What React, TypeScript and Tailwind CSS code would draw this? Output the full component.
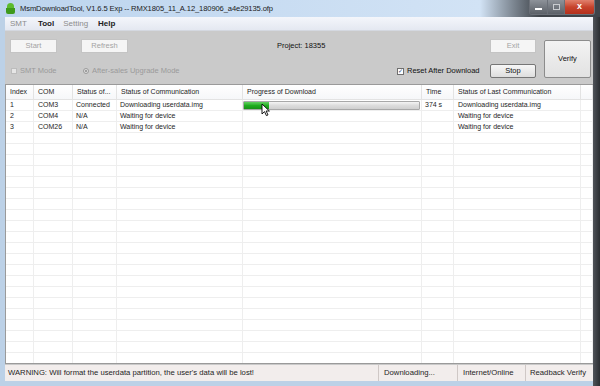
import React from 'react';

const cols = [
  { w: 28, label: 'Index' },
  { w: 39, label: 'COM' },
  { w: 44, label: 'Status of...' },
  { w: 126, label: 'Status of Communication' },
  { w: 179, label: 'Progress of Download' },
  { w: 32, label: 'Time' },
  { w: 127, label: 'Status of Last Communication' },
  { w: 12, label: '' },
];

const rows = [
  { index: '1', com: 'COM3', st: 'Connected', comm: 'Downloading userdata.img', progress: 14, time: '374 s', last: 'Downloading userdata.img' },
  { index: '2', com: 'COM4', st: 'N/A', comm: 'Waiting for device', progress: -1, time: '', last: 'Waiting for device' },
  { index: '3', com: 'COM26', st: 'N/A', comm: 'Waiting for device', progress: -1, time: '', last: 'Waiting for device' },
];

function Cursor() {
  return (
    <svg width="10" height="14" viewBox="0 0 10 14" className="absolute left-[17px] top-[1px]">
      <path d="M1 1 L1 11 L3.5 8.6 L5.4 12.6 L7 11.9 L5.1 8 L8.4 8 Z" fill="#fff" stroke="#000" strokeWidth="0.9" strokeLinejoin="round" />
    </svg>
  );
}

function Progress({ pct }: { pct: number }) {
  return (
    <div className="relative h-[9px] w-[177px] border border-[#a8a8a8] bg-gradient-to-b from-[#f4f4f4] via-[#dcdcdc] to-[#cfcfcf] rounded-[1px]">
      <div className="h-full bg-gradient-to-b from-[#5fd05f] via-[#1fae1f] to-[#189018]" style={{ width: `${pct}%` }} />
      <Cursor />
    </div>
  );
}

export default function App() {
  const empty = Array.from({ length: 21 });
  return (
    <div className="w-[600px] h-[386px] bg-[#34383d] overflow-hidden text-black" style={{ fontFamily: '"Liberation Sans", Arial, sans-serif' }}>
      {/* Title bar */}
      <div className="flex items-center h-[17px] w-[600px] bg-gradient-to-r from-[#bcd4ee] via-[#d2e3f5] via-80% to-[#3f444a] to-90%">
        <div className="ml-[5px] w-[10px] h-[11px] flex flex-col items-center">
          <div className="w-[7px] h-[5px] rounded-t-full bg-[#5dbb2e]" />
          <div className="w-[9px] h-[6px] mt-[0.5px] bg-[#3f9a1c] rounded-b-[2px]" />
        </div>
        <span className="ml-[5px] text-[7.6px] tracking-[-0.12px] text-[#1b1b1b] whitespace-nowrap">MsmDownloadTool, V1.6.5 Exp -- RMX1805_11_A.12_180906_a4e29135.ofp</span>
        <div className="ml-auto mr-[5px] flex h-[15px] self-start rounded-b-[3px] overflow-hidden border border-t-0 border-[#6b7078]">
          <div className="w-[18px] flex items-end justify-center pb-[4px] bg-gradient-to-b from-[#8d9299] to-[#5c6168] border-r border-[#6b7078]">
            <div className="w-[7px] h-[2px] bg-white" />
          </div>
          <div className="w-[17px] flex items-center justify-center bg-gradient-to-b from-[#8d9299] to-[#5c6168] border-r border-[#6b7078]">
            <div className="w-[7px] h-[6px] border border-[#c9ccd0]" />
          </div>
          <div className="w-[29px] flex items-center justify-center bg-gradient-to-b from-[#e0806c] via-[#c7432c] to-[#b4301c] text-white text-[9px] font-bold">x</div>
        </div>
      </div>

      <div className="flex h-[369px]">
        <div className="w-[593px] bg-[#bcd1e7] pl-[5px] pb-[5px] flex flex-col">
          {/* Menu */}
          <div className="h-[14px] flex items-center bg-gradient-to-b from-[#f4f6fb] to-[#e4e8f1] text-[8px] border-b border-[#d4d8e0] whitespace-nowrap">
            <span className="ml-[5px] text-[#8c8c8c]">SMT</span>
            <span className="ml-[11px] font-bold text-[#222]">Tool</span>
            <span className="ml-[9px] text-[#8c8c8c]">Setting</span>
            <span className="ml-[10px] font-bold text-[#222]">Help</span>
          </div>

          {/* Toolbar */}
          <div className="h-[53px] bg-[#cacaca] flex text-[7.5px] whitespace-nowrap">
            <div className="flex-1 flex flex-col">
              <div className="flex items-center mt-[8px] h-[14px]">
                <button className="ml-[5px] w-[47px] h-[14px] bg-[#f5f5f5] border border-[#c4c4c4] text-[#a3a3a3]">Start</button>
                <button className="ml-[24px] w-[47px] h-[14px] bg-[#f5f5f5] border border-[#c4c4c4] text-[#a3a3a3]">Refresh</button>
                <span className="ml-[149px] text-[#111]">Project: 18355</span>
                <button className="ml-auto mr-[8px] w-[46px] h-[14px] bg-[#f5f5f5] border border-[#c4c4c4] text-[#a3a3a3]">Exit</button>
              </div>
              <div className="flex items-center mt-[11px] h-[14px]">
                <div className="shrink-0 ml-[6px] w-[6px] h-[6px] bg-[#e6e6e6] border border-[#bcbcbc]" />
                <span className="shrink-0 w-[63px] ml-[3px] text-[#9a9a9a]">SMT Mode</span>
                <div className="shrink-0 w-[6px] h-[6px] rounded-full border border-[#9a9a9a] bg-[#dedede] flex items-center justify-center">
                  <div className="w-[2px] h-[2px] rounded-full bg-[#8a8a8a]" />
                </div>
                <span className="shrink-0 w-[305px] ml-[3px] text-[#9a9a9a]">After-sales Upgrade Mode</span>
                <div className="shrink-0 w-[7px] h-[7px] bg-white border border-[#6f6f6f] flex items-center justify-center text-[6px] leading-none text-[#1f3f7a]">✓</div>
                <span className="shrink-0 ml-[3px] text-[#111]">Reset After Download</span>
                <button className="shrink-0 ml-auto mr-[8px] w-[46px] h-[14px] bg-gradient-to-b from-[#f7f7f7] to-[#dedede] border border-[#767676] rounded-[2px] text-[#111]">Stop</button>
              </div>
            </div>
            <button className="mt-[9px] mr-[2px] w-[47px] h-[38px] bg-gradient-to-b from-[#f3f3f3] to-[#e2e2e2] border border-[#8c8c8c] rounded-[2px] text-[#111]">Verify</button>
          </div>

          {/* Table */}
          <div className="flex-1 bg-white border border-[#9a9a9a] border-r-0 overflow-hidden text-[7px]">
            <div className="flex h-[15px] border-b border-[#e3e3e3] bg-gradient-to-b from-white to-[#f6f7f9]">
              {cols.map((c, i) => (
                <div key={i} className="flex items-center pl-[4px] border-r border-[#e3e3e3] whitespace-nowrap text-[#1e1e1e]" style={{ width: c.w }}>{c.label}</div>
              ))}
            </div>
            {rows.map((r) => (
              <div key={r.index} className="flex h-[11px] border-b border-[#eeeeee] text-[#1e1e1e] whitespace-nowrap">
                <div className="w-[28px] pl-[4px] border-r border-[#eeeeee] flex items-center">{r.index}</div>
                <div className="w-[39px] pl-[4px] border-r border-[#eeeeee] flex items-center">{r.com}</div>
                <div className="w-[44px] pl-[3px] border-r border-[#eeeeee] flex items-center">{r.st}</div>
                <div className="w-[126px] pl-[3px] border-r border-[#eeeeee] flex items-center">{r.comm}</div>
                <div className="w-[179px] border-r border-[#eeeeee] flex items-center">{r.progress >= 0 ? <Progress pct={r.progress} /> : null}</div>
                <div className="w-[32px] pl-[3px] border-r border-[#eeeeee] flex items-center">{r.time}</div>
                <div className="w-[127px] pl-[4px] border-r border-[#eeeeee] flex items-center">{r.last}</div>
                <div className="w-[12px] border-r border-[#eeeeee]" />
              </div>
            ))}
            {empty.map((_, i) => (
              <div key={i} className="flex h-[11px] border-b border-[#eeeeee]">
                {cols.map((c, j) => (
                  <div key={j} className="border-r border-[#eeeeee]" style={{ width: c.w }} />
                ))}
              </div>
            ))}
          </div>

          {/* Status bar */}
          <div className="h-[17px] flex items-center bg-[#f2edec] border-t border-[#c9c9c9] text-[7.7px] text-[#1e1e1e] whitespace-nowrap">
            <span className="ml-[3px] w-[370px]">WARNING: Will format the userdata partition, the user's data will be lost!</span>
            <div className="h-full border-l border-[#cfc8c6] w-[79px] pl-[5px] flex items-center">Downloading...</div>
            <div className="h-full border-l border-[#cfc8c6] w-[68px] pl-[5px] flex items-center">Internet/Online</div>
            <div className="h-full border-l border-[#cfc8c6] flex-1 pl-[4px] flex items-center">Readback Verify</div>
          </div>
        </div>
        <div className="flex-1 bg-gradient-to-r from-[#50545a] to-[#2b2e32]" />
      </div>
    </div>
  );
}
